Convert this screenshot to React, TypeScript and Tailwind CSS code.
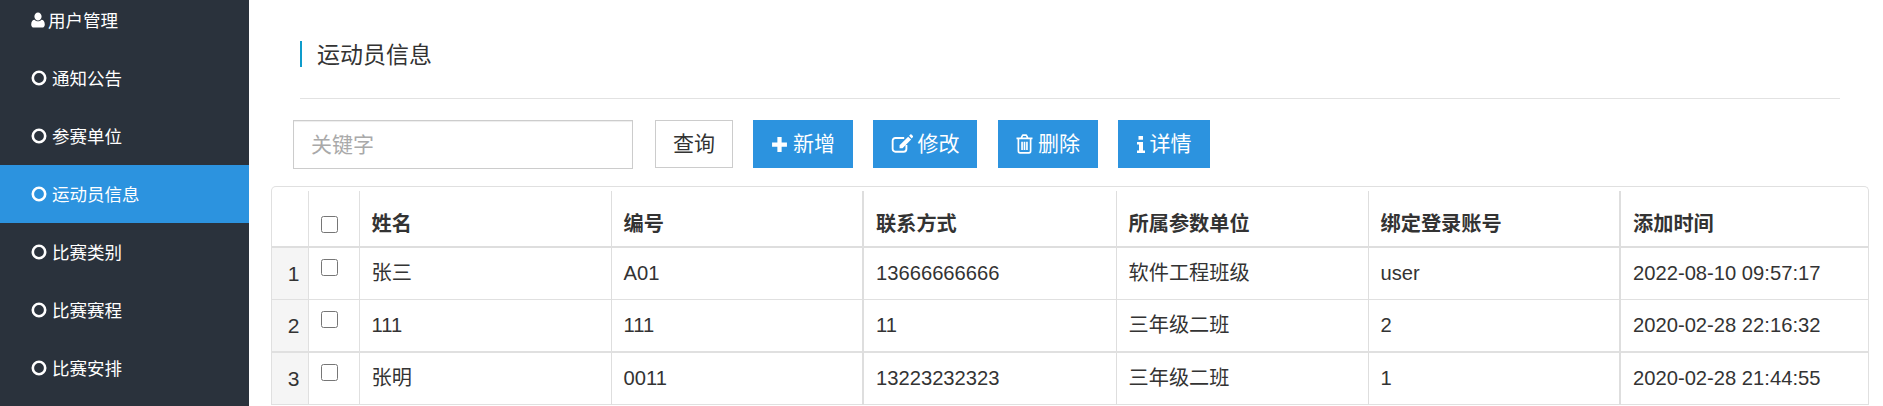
import React from "react";

const nav = ["通知公告", "参赛单位", "运动员信息", "比赛类别", "比赛赛程", "比赛安排"];

const rows = [
  ["1", "张三", "A01", "13666666666", "软件工程班级", "user", "2022-08-10 09:57:17"],
  ["2", "111", "111", "11", "三年级二班", "2", "2020-02-28 22:16:32"],
  ["3", "张明", "0011", "13223232323", "三年级二班", "1", "2020-02-28 21:44:55"],
];

const heads = ["姓名", "编号", "联系方式", "所属参数单位", "绑定登录账号", "添加时间"];

function Ring() {
  return (
    <svg width="16" height="16" viewBox="0 0 16 16" className="shrink-0">
      <circle cx="8" cy="8" r="6.2" fill="none" stroke="#fff" strokeWidth="2.6" />
    </svg>
  );
}

function UserIcon() {
  return (
    <svg width="14" height="16" viewBox="0 0 14 16" className="shrink-0">
      <path fill="#fff" d="M7 0.5c2 0 3.6 1.8 3.6 4S9 8.6 7 8.6 3.4 6.7 3.4 4.5 5 0.5 7 0.5zM3.6 7.7C4.5 8.7 5.7 9.3 7 9.3s2.5-.6 3.4-1.6c2 .2 3.4 1.5 3.4 4.7 0 1.9-1.1 3.1-2.7 3.1H2.9C1.3 15.5.2 14.3.2 12.4c0-3.2 1.4-4.5 3.4-4.7z" />
    </svg>
  );
}

function Btn({ icon, label, w }: { icon: React.ReactNode; label: string; w: string }) {
  return (
    <button className={`${w} h-[48px] bg-[#2c93df] text-white text-[21px] flex items-center justify-center gap-[5px]`}>
      {icon}
      <span>{label}</span>
    </button>
  );
}

const PlusIcon = (
  <svg width="17" height="17" viewBox="0 0 16 16"><path fill="#fff" d="M6 1h4v5h5v4h-5v5H6v-5H1V6h5z" /></svg>
);
const EditIcon = (
  <svg width="22" height="20" viewBox="0 0 20 18">
    <path fill="none" stroke="#fff" strokeWidth="1.7" d="M14 10v3.5a2.5 2.5 0 0 1-2.5 2.500H4a2.500 2.500 0 0 1-2.500-2.500V6A2.500 2.500 0 0 1 4 3.500h8" />
    <path fill="#fff" d="M15.600 2.300l2.700 2.700-7.800 7.800H7.800v-2.700zM16.400 1.500l1-1c.4-.4 1-.4 1.400 0l1 1c.4.4.4 1 0 1.400l-1 1z" />
  </svg>
);
const TrashIcon = (
  <svg width="17" height="20" viewBox="0 0 15 18">
    <path fill="none" stroke="#fff" strokeWidth="1.5" d="M2 4.500v10.800c0 1 .7 1.700 1.500 1.700h8c.8 0 1.500-.7 1.500-1.700V4.500M.3 4h14.400M4.500 4l1-2.400c.1-.3.4-.6.8-.6h2.400c.4 0 .7.3.8.6l1 2.400M5.300 7v7.500M7.500 7v7.500M9.700 7v7.500" />
  </svg>
);
const InfoIcon = (
  <svg width="8" height="17" viewBox="0 0 8 17">
    <path fill="#fff" d="M1.500 0h4.500v3.800H1.500zM0 6h6v8.500h2V17H0v-2.500h2V8.500H0z" />
  </svg>
);

export default function App() {
  return (
    <div className="flex h-[406px] w-full overflow-hidden bg-white text-[#333] font-['Liberation_Sans','Noto_Sans_CJK_SC',sans-serif]">
      <aside className="w-[249px] shrink-0 bg-[#2a323c] text-white text-[17.5px]">
        <div className="h-[58px] -mt-[9px] pl-[31px] flex items-center gap-[3px]">
          <UserIcon />
          <span className="pt-[2px]">用户管理</span>
        </div>
        {nav.map((n) => (
          <div
            key={n}
            className={`h-[58px] pl-[31px] flex items-center gap-[5px] ${n === "运动员信息" ? "bg-[#2c93df]" : ""}`}
          >
            <Ring />
            <span className="pt-[2px]">{n}</span>
          </div>
        ))}
      </aside>
      <main className="flex-1 min-w-0 pl-[22px] pr-[14px]">
        <div className="ml-[29px] mr-[29px] pt-[41px] h-[99px] border-b border-[#e2e2e2]">
          <div className="h-[26px] border-l-2 border-[#0e9ccb] pl-[15px] pt-[3px] flex items-center text-[23px]">运动员信息</div>
        </div>
        <div className="flex mt-[21px] ml-[22px] h-[49px] text-[21px]">
          <input
            placeholder="关键字"
            className="w-[340px] h-[49px] border border-[#cccccc] px-[17px] outline-none shadow-[inset_0_1px_1px_rgba(0,0,0,0.075)] placeholder:text-[#a9a9a9]"
          />
          <button className="ml-[22px] w-[78px] h-[48px] border border-[#cccccc]">查询</button>
          <div className="ml-[20px] flex">
            <Btn icon={PlusIcon} label="新增" w="w-[100px]" />
            <div className="w-[20px]" />
            <Btn icon={EditIcon} label="修改" w="w-[104px]" />
            <div className="w-[21px]" />
            <Btn icon={TrashIcon} label="删除" w="w-[100px]" />
            <div className="w-[20px]" />
            <Btn icon={InfoIcon} label="详情" w="w-[92px]" />
          </div>
        </div>
        <div className="mt-[17px] border border-b-0 border-[#e0e0e0] rounded-t-[5px] pt-[4px]">
          <table className="w-full table-fixed border-collapse text-[20.2px]">
            <colgroup>
              <col className="w-[36px]" />
              <col className="w-[51px]" />
              <col className="w-[252px]" />
              <col className="w-[252px]" />
              <col className="w-[253px]" />
              <col className="w-[252px]" />
              <col className="w-[252px]" />
              <col />
            </colgroup>
            <thead>
              <tr className="h-[56px] border-b-2 border-[#dedede]">
                <th className="border-r border-[#e0e0e0]" />
                <th className="border-r border-[#e0e0e0] pl-[12px] text-left align-middle">
                  <input type="checkbox" className="block w-[17px] h-[17px] mt-[11px]" />
                </th>
                {heads.map((h, i) => (
                  <th
                    key={h}
                    className={`pl-[12px] text-left font-bold pt-[11px] border-[#dedede] ${i === 1 || i === 4 ? "border-r-2" : i < 5 ? "border-r" : ""}`}
                  >
                    {h}
                  </th>
                ))}
              </tr>
            </thead>
            <tbody>
              {rows.map((r, ri) => (
                <tr
                  key={r[0]}
                  className={`h-[52.5px] border-[#e0e0e0] ${ri === 1 ? "border-b-2" : "border-b"}`}
                >
                  <td className="bg-[#f5f5f5] text-right pr-[8px] text-[21px] border-r border-[#e0e0e0]">{r[0]}</td>
                  <td className="border-r border-[#e0e0e0] pl-[12px] align-top pt-[11px]">
                    <input type="checkbox" className="block w-[17px] h-[17px]" />
                  </td>
                  {r.slice(1).map((c, i) => (
                    <td
                      key={i}
                      className={`pl-[12px] border-[#dedede] ${i === 1 || i === 4 ? "border-r-2" : i < 5 ? "border-r" : ""}`}
                    >
                      {c}
                    </td>
                  ))}
                </tr>
              ))}
            </tbody>
          </table>
        </div>
      </main>
    </div>
  );
}
